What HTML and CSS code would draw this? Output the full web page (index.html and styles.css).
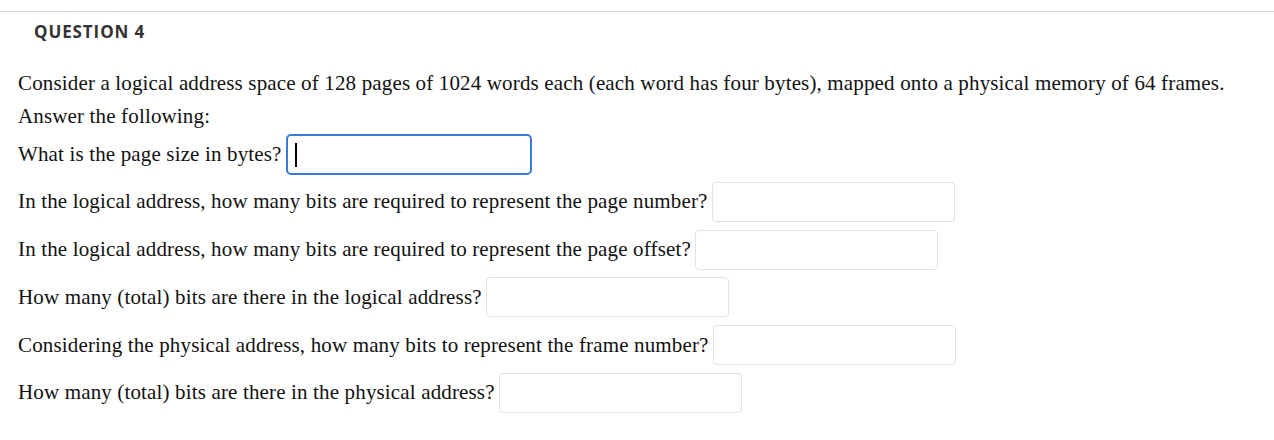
FILE: index.html
```html
<!DOCTYPE html>
<html lang="en">
<head>
    <meta charset="UTF-8">
    <title>Question 4</title>
    <link rel="stylesheet" href="styles.css">
</head>
<body>
    <div class="question">
        <h3 class="question-title">QUESTION 4</h3>

        <div class="question-body">
            <p class="intro">Consider a logical address space of 128 pages of 1024 words each (each word has four bytes), mapped onto a physical memory of 64 frames.</p>
            <p class="intro">Answer the following:</p>

            <div class="row">
                <label for="q1">What is the page size in bytes?</label>
                <span class="field focused">
                    <input type="text" id="q1" class="answer">
                </span>
            </div>
            <div class="row">
                <label for="q2">In the logical address, how many bits are required to represent the page number?</label>
                <input type="text" id="q2" class="answer">
            </div>
            <div class="row">
                <label for="q3">In the logical address, how many bits are required to represent the page offset?</label>
                <input type="text" id="q3" class="answer">
            </div>
            <div class="row">
                <label for="q4">How many (total) bits are there in the logical address?</label>
                <input type="text" id="q4" class="answer">
            </div>
            <div class="row">
                <label for="q5">Considering the physical address, how many bits to represent the frame number?</label>
                <input type="text" id="q5" class="answer">
            </div>
            <div class="row">
                <label for="q6">How many (total) bits are there in the physical address?</label>
                <input type="text" id="q6" class="answer">
            </div>
        </div>
    </div>
</body>
</html>
```

FILE: styles.css
```css
body {
    margin: 0;
    padding-top: 11px;
    background: #fff;
    font-family: "Liberation Serif", "Times New Roman", serif;
    color: #111;
}
.question {
    border-top: 1px solid #d0d0d0;
}
.question-title {
    margin: 0;
    padding: 10px 0 0 34px;
    height: 30px;
    font-family: "Open Sans", Arial, sans-serif;
    font-size: 17px;
    font-weight: 700;
    letter-spacing: 0.9px;
    color: #333;
    line-height: 20px;
}
.question-body {
    padding: 19px 0 0 18px;
}
.intro {
    margin: 0 0 9px;
    font-size: 21px;
    letter-spacing: 0.15px;
    line-height: 24px;
}
.intro + .intro {
    margin-bottom: 6px;
}
.row {
    display: flex;
    align-items: center;
    gap: 4px;
    height: 40px;
    margin-bottom: 7.8px;
    font-size: 21px;
    letter-spacing: 0.15px;
}
.answer {
    box-sizing: border-box;
    width: 243px;
    height: 40px;
    margin: 0;
    padding: 0 10px;
    border: 1px solid #e2e2e2;
    border-radius: 4px;
    font-size: 16px;
    outline: none;
}

/* focused field with its text caret */
.field {
    position: relative;
    display: block;
}
.field.focused .answer {
    width: 246px;
    height: 41px;
    border: 2px solid #3a7bd5;
    border-radius: 5px;
}
.field.focused::after {
    content: "";
    position: absolute;
    left: 9px;
    top: 9px;
    width: 2px;
    height: 24px;
    background: #000;
}
```
